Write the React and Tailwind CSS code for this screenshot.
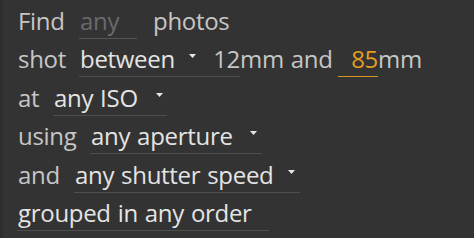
import React from "react";

const font = { fontFamily: '"Open Sans", "Noto Sans", sans-serif' };

function Drop({ w, children, arrow = true, arrowRight = "right-[5px]" }) {
  return (
    <div className={`relative flex items-end h-full border-b border-[#4e4e4e] ${w}`}>
      <span className="pl-[1px] pb-[1px] leading-[32px] text-[#e4e4e4] whitespace-nowrap">{children}</span>
      {arrow && (
        <svg width="7" height="4" viewBox="0 0 7 4" className={`absolute ${arrowRight} bottom-[18px]`}>
          <path d="M0 0 H7 L3.5 4 Z" fill="#e6e6e6" />
        </svg>
      )}
    </div>
  );
}

function Label({ w, children, cls = "" }) {
  return (
    <span className={`pb-[2px] leading-[32px] text-[#c6c6c6] whitespace-nowrap ${w} ${cls}`}>{children}</span>
  );
}

export default function App() {
  return (
    <div
      className="w-[474px] h-[238px] bg-[#333333] border-l-[3px] border-[#2d2d2d] pl-[15px] text-[24px] tracking-[-0.3px] [word-spacing:1px] overflow-hidden"
      style={font}
    >
      <div className="flex items-end h-[38.5px]">
        <Label w="w-[61px]">Find</Label>
        <div className="flex items-end h-full w-[58px] border-b border-[#555555]">
          <span className="pl-[1px] pb-[1px] leading-[32px] text-[#6a6a6a]">any</span>
        </div>
        <Label w="" cls="ml-[16px]">photos</Label>
      </div>
      <div className="flex items-end h-[38.5px]">
        <Label w="w-[61px]">shot</Label>
        <Drop w="w-[122px]" arrowRight="right-[5px]">between</Drop>
        <div className="flex items-end justify-end h-full w-[39px] border-b border-[#4e4e4e]">
          <span className="pb-[1px] leading-[32px] text-[#c6c6c6]">12</span>
        </div>
        <Label w="w-[98px]">mm and</Label>
        <div className="flex items-end justify-end h-full w-[40px] border-b border-[#d8951f]">
          <span className="pb-[1px] leading-[32px] text-[#e39d22]">85</span>
        </div>
        <Label w="">mm</Label>
      </div>
      <div className="flex items-end h-[38.5px]">
        <Label w="w-[35px]">at</Label>
        <Drop w="w-[114px]" arrowRight="right-[4px]">any ISO</Drop>
      </div>
      <div className="flex items-end h-[38.5px]">
        <Label w="w-[72px]">using</Label>
        <Drop w="w-[172px]" arrowRight="right-[5px]">any aperture</Drop>
      </div>
      <div className="flex items-end h-[38.5px]">
        <Label w="w-[56px]">and</Label>
        <Drop w="w-[226px]" arrowRight="right-[5px]">any shutter speed</Drop>
      </div>
      <div className="flex items-end h-[38.5px] -ml-[1px]">
        <Drop w="w-[252px]" arrow={false}>grouped in any order</Drop>
      </div>
    </div>
  );
}
